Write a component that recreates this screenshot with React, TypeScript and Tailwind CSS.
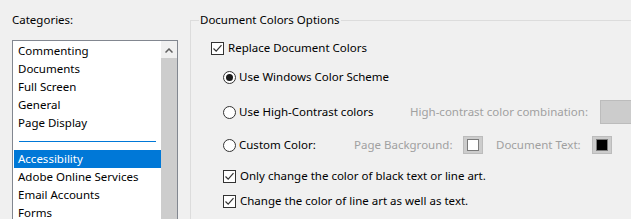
import type { ReactNode } from 'react'

const font = { fontFamily: '"Segoe UI", "Noto Sans", sans-serif' }

function CheckBox({ checked = true }: { checked?: boolean }) {
  return (
    <span className="flex size-[13px] flex-none items-center justify-center border border-[#333] bg-white">
      {checked && (
        <svg viewBox="0 0 11 11" className="size-[11px]" aria-hidden>
          <path d="M1.5 5.5 L4.2 8.2 L9.5 2.2" fill="none" stroke="#333" strokeWidth="1.2" />
        </svg>
      )}
    </span>
  )
}

function Radio({ checked = false }: { checked?: boolean }) {
  return (
    <span className="flex size-[13px] flex-none items-center justify-center rounded-full border border-[#333] bg-white">
      {checked && <span className="size-[7px] rounded-full bg-[#1a1a1a]" />}
    </span>
  )
}

function Swatch({ color }: { color: string }) {
  return (
    <span className="flex h-[18px] w-[20px] flex-none items-center justify-center border border-[#bcbcbc] bg-[#cccccc]">
      <span className={`size-[12px] border border-[#7a7a7a] ${color}`} />
    </span>
  )
}

function Row({ className, children }: { className: string; children: ReactNode }) {
  return <div className={`flex items-center whitespace-nowrap ${className}`}>{children}</div>
}

const categories = ['Commenting', 'Documents', 'Full Screen', 'General', 'Page Display']
const more = ['Adobe Online Services', 'Email Accounts', 'Forms']

export default function App() {
  return (
    <div className="flex h-[219px] w-[631px] overflow-hidden bg-[#f0f0f0] text-[11.5px] text-black" style={font}>
      <div className="flex w-[190px] flex-none flex-col pl-[12px]">
        <div className="mt-[12px] h-[16px] leading-[16px]">Categories:</div>
        <div className="mt-[12px] flex h-[200px] w-[166px] border border-[#828790] bg-white">
          <div className="flex flex-1 flex-col pt-[1px] pl-[1px]">
            {categories.map((c) => (
              <div key={c} className="h-[18px] pl-[4px] leading-[18px]">
                {c}
              </div>
            ))}
            <div className="flex h-[18px] items-center px-[5px]">
              <div className="h-px w-full bg-[#0078d7]" />
            </div>
            <div className="h-[18px] bg-[#0078d7] pl-[4px] leading-[18px] text-white">Accessibility</div>
            {more.map((c) => (
              <div key={c} className="h-[18px] pl-[4px] leading-[18px]">
                {c}
              </div>
            ))}
          </div>
          <div className="flex w-[16px] flex-none flex-col">
            <div className="flex h-[17px] items-center justify-center bg-[#f0f0f0] pt-px">
              <svg viewBox="0 0 8 5" className="h-[5px] w-[8px]" aria-hidden>
                <path d="M0.5 4.5 L4 1 L7.5 4.5" fill="none" stroke="#606060" strokeWidth="1.5" />
              </svg>
            </div>
            <div className="flex-1 bg-[#cdcdcd]" />
          </div>
        </div>
      </div>

      <div className="relative mt-[20px] flex-1 border-t border-l border-[#dcdcdc]">
        <div className="absolute -top-[9px] left-[8px] bg-[#f0f0f0] px-px leading-[16px]">Document Colors Options</div>
        <div className="flex flex-col pl-[20px]">
          <Row className="mt-[20px] h-[14px] gap-[4px]">
            <CheckBox />
            <span>Replace Document Colors</span>
          </Row>
          <Row className="mt-[15px] h-[14px] gap-[3px] pl-[12px]">
            <Radio checked />
            <span>Use Windows Color Scheme</span>
          </Row>
          <Row className="mt-[16px] h-[24px] pl-[12px]">
            <Radio />
            <span className="ml-[3px] w-[171px]">Use High-Contrast colors</span>
            <span className="w-[190px] text-[#a0a0a0]">High-contrast color combination:</span>
            <span className="h-[24px] w-[40px] flex-none border border-[#bcbcbc] bg-[#cccccc]" />
          </Row>
          <Row className="mt-[11px] h-[20px] pl-[12px]">
            <Radio />
            <span className="ml-[3px] w-[115px]">Custom Color:</span>
            <span className="w-[109px] text-[#a0a0a0]">Page Background:</span>
            <Swatch color="bg-white" />
            <span className="ml-[13px] w-[96px] text-[#a0a0a0]">Document Text:</span>
            <Swatch color="bg-black" />
          </Row>
          <Row className="mt-[14px] h-[14px] gap-[4px] pl-[12px]">
            <CheckBox />
            <span>Only change the color of black text or line art.</span>
          </Row>
          <Row className="mt-[11px] h-[14px] gap-[4px] pl-[12px]">
            <CheckBox />
            <span>Change the color of line art as well as text.</span>
          </Row>
        </div>
      </div>
    </div>
  )
}
